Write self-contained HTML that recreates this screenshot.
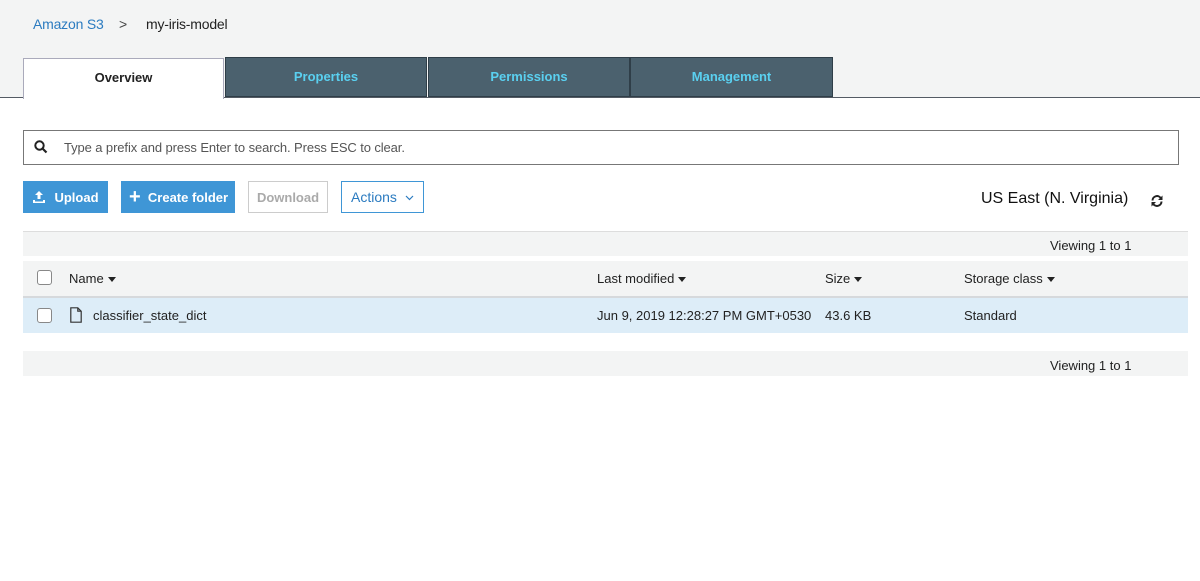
<!DOCTYPE html>
<html><head><meta charset="utf-8"><style>
*{box-sizing:border-box;margin:0;padding:0}
body{width:1200px;height:581px;background:#fff;font-family:"Liberation Sans",sans-serif;font-size:13px;color:#222;position:relative;overflow:hidden}
.abs{position:absolute}
.top{left:0;top:0;width:1200px;height:98px;background:#f3f4f4;border-bottom:1px solid #545b64}
.tab{top:57px;height:40px;background:#4b616e;border:1px solid #2f3e48;color:#5ad0f0;font-weight:bold;font-size:13px;text-align:center;line-height:38px}
.btn{top:181px;height:32px;line-height:33px;font-size:13px;font-weight:bold;text-align:center}
.blue{background:#3f96d6;color:#fff}
.bar{left:23px;width:1165px;background:#f3f4f4}
.cb{width:15px;height:15px;border:1px solid #888;border-radius:3px;background:#fff}
.tri{display:inline-block;width:0;height:0;border-left:4px solid transparent;border-right:4px solid transparent;border-top:5px solid #222;vertical-align:middle;margin-left:4px}
</style></head><body>
<div class="abs top"></div>
<div class="abs" style="left:33px;top:16px;font-size:14px;color:#2b7bc0;letter-spacing:-0.2px">Amazon S3</div>
<div class="abs" style="left:119px;top:16px;font-size:14px;color:#444">&gt;</div>
<div class="abs" style="left:146px;top:16px;font-size:14px;color:#222;letter-spacing:-0.2px">my-iris-model</div>
<div class="abs" style="left:23px;top:58px;width:201px;height:41px;background:#fff;border:1px solid #aab;border-bottom:none;text-align:center;line-height:38px;font-weight:bold;font-size:13px">Overview</div>
<div class="abs tab" style="left:225px;width:202px">Properties</div>
<div class="abs tab" style="left:428px;width:202px">Permissions</div>
<div class="abs tab" style="left:630px;width:203px">Management</div>
<div class="abs" style="left:23px;top:130px;width:1156px;height:35px;border:1px solid #777"></div>
<svg class="abs" style="left:34px;top:140px" width="14" height="14" viewBox="0 0 14 14"><circle cx="5.5" cy="5.5" r="4.2" fill="none" stroke="#222" stroke-width="2"/><path d="M8.5 8.5L12.5 12.5" stroke="#222" stroke-width="2.2"/></svg>
<div class="abs" style="left:64px;top:140px;color:#555;font-size:13px;letter-spacing:-0.1px">Type a prefix and press Enter to search. Press ESC to clear.</div>
<div class="abs btn blue" style="left:23px;width:85px;padding-left:22px"><svg class="abs" style="left:9px;top:9px" width="14" height="14" viewBox="0 0 14 14"><path d="M7 1L3 5h2.5v4h3V5H11z M1 10v3h12v-3h-2v1.5H3V10z" fill="#fff"/></svg>Upload</div>
<div class="abs btn blue" style="left:121px;width:114px;padding-left:20px"><span class="abs" style="left:8px;top:0;font-size:20px">+</span>Create folder</div>
<div class="abs btn" style="left:248px;width:80px;border:1px solid #ccc;color:#aaa;background:#fff;line-height:31px">Download</div>
<div class="abs btn" style="left:341px;width:83px;border:1px solid #3f96d6;color:#2b7bc0;background:#fff;line-height:31px;font-weight:normal;font-size:14px;text-align:left;padding-left:9px">Actions<svg class="abs" style="left:63px;top:13px" width="9" height="6" viewBox="0 0 9 6"><path d="M1 1l3.5 3.5L8 1" fill="none" stroke="#2b7bc0" stroke-width="1.2"/></svg></div>
<div class="abs" style="left:981px;top:190px;font-size:16px;color:#111">US East (N. Virginia)</div>
<svg class="abs" style="left:1150px;top:194px" width="14" height="14" viewBox="0 0 14 14"><path d="M2.5 6.5A4.5 4.5 0 0 1 11 4.5M11.5 7.5A4.5 4.5 0 0 1 3 9.5" fill="none" stroke="#222" stroke-width="2"/><path d="M12.5 1.5v4.5h-4.5z M1.5 12.5V8h4.5z" fill="#222"/></svg>
<div class="abs bar" style="top:231px;height:25px;border-top:1px solid #ddd"></div>
<div class="abs" style="left:1050px;top:238px;color:#222">Viewing 1 to 1</div>
<div class="abs bar" style="top:261px;height:36px"></div>
<div class="abs cb" style="left:37px;top:270px"></div>
<div class="abs" style="left:69px;top:271px">Name<span class="tri"></span></div>
<div class="abs" style="left:597px;top:271px">Last modified<span class="tri"></span></div>
<div class="abs" style="left:825px;top:271px">Size<span class="tri"></span></div>
<div class="abs" style="left:964px;top:271px">Storage class<span class="tri"></span></div>
<div class="abs bar" style="top:296px;height:37px;background:#ddedf8;border-top:2px solid #d6d9dc"></div>
<div class="abs cb" style="left:37px;top:308px"></div>
<svg class="abs" style="left:70px;top:307px" width="12" height="16" viewBox="0 0 12 16"><path d="M0.8 0.8h7l3.4 3.4v11H0.8z M7.8 0.8v3.4h3.4" fill="none" stroke="#333" stroke-width="1.2"/></svg>
<div class="abs" style="left:93px;top:308px">classifier_state_dict</div>
<div class="abs" style="left:597px;top:308px">Jun 9, 2019 12:28:27 PM GMT+0530</div>
<div class="abs" style="left:825px;top:308px">43.6 KB</div>
<div class="abs" style="left:964px;top:308px">Standard</div>
<div class="abs bar" style="top:351px;height:25px"></div>
<div class="abs" style="left:1050px;top:358px;color:#222">Viewing 1 to 1</div>
</body></html>
